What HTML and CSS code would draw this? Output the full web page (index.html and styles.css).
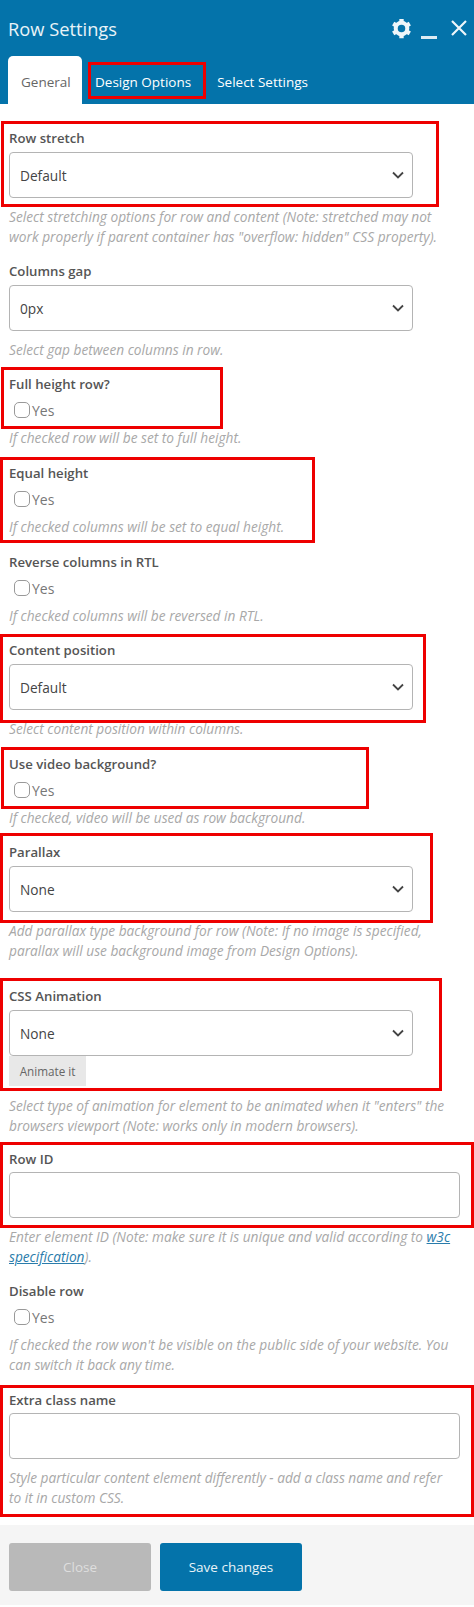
FILE: index.html
```html
<!DOCTYPE html>
<html lang="en">
  <head>
    <meta charset="UTF-8" />
    <title>Row Settings</title>
    <link rel="stylesheet" href="styles.css">
  </head>
  <body>
    <div class="panel">
      <div class="header">
        <div class="title-row">
          <div class="title">Row Settings</div>
          <div class="controls">
            <svg class="gear" viewBox="0 0 24 24">
              <g fill="none" stroke="#eef6fa">
                <circle cx="12" cy="12" r="6.6" stroke-width="4.6" />
                <path stroke-width="5" d="M12 1v4M12 19v4M2.5 6.5l3.5 2M18 15.5l3.5 2M2.5 17.5l3.5-2M18 8.500l3.5-2" />
              </g>
            </svg>
            <div class="minimize"></div>
            <svg class="close-x" viewBox="0 0 16 16"><path stroke="#eef6fa" stroke-width="2.2" d="M1 1l14 14M15 1L1 15"/></svg>
          </div>
        </div>
        <div class="tabs">
          <div class="tab active">General</div>
          <div class="tab">Design Options</div>
          <div class="tab">Select Settings</div>
        </div>
      </div>

      <div class="body">
        <div class="field">
          <div class="label">Row stretch</div>
          <div class="select">Default<svg viewBox="0 0 12 8"><path d="M1 1.500l5 5 5-5"/></svg></div>
          <div class="help">Select stretching options for row and content (Note: stretched may not work properly if parent container has "overflow: hidden" CSS property).</div>
        </div>
        <div class="field">
          <div class="label">Columns gap</div>
          <div class="select">0px<svg viewBox="0 0 12 8"><path d="M1 1.500l5 5 5-5"/></svg></div>
          <div class="help">Select gap between columns in row.</div>
        </div>
        <div class="field gap-wide">
          <div class="label">Full height row?</div>
          <div class="check"><span class="box"></span>Yes</div>
          <div class="help">If checked row will be set to full height.</div>
        </div>
        <div class="field gap-wide">
          <div class="label">Equal height</div>
          <div class="check"><span class="box"></span>Yes</div>
          <div class="help">If checked columns will be set to equal height.</div>
        </div>
        <div class="field">
          <div class="label">Reverse columns in RTL</div>
          <div class="check"><span class="box"></span>Yes</div>
          <div class="help">If checked columns will be reversed in RTL.</div>
        </div>
        <div class="field gap-wide">
          <div class="label">Content position</div>
          <div class="select">Default<svg viewBox="0 0 12 8"><path d="M1 1.500l5 5 5-5"/></svg></div>
          <div class="help">Select content position within columns.</div>
        </div>
        <div class="field">
          <div class="label">Use video background?</div>
          <div class="check"><span class="box"></span>Yes</div>
          <div class="help">If checked, video will be used as row background.</div>
        </div>
        <div class="field parallax">
          <div class="label">Parallax</div>
          <div class="select">None<svg viewBox="0 0 12 8"><path d="M1 1.500l5 5 5-5"/></svg></div>
          <div class="help">Add parallax type background for row (Note: If no image is specified, parallax will use background image from Design Options).</div>
        </div>
        <div class="field animation">
          <div class="label">CSS Animation</div>
          <div class="select">None<svg viewBox="0 0 12 8"><path d="M1 1.500l5 5 5-5"/></svg></div>
          <div class="animate">Animate it</div>
          <div class="help">Select type of animation for element to be animated when it "enters" the browsers viewport (Note: works only in modern browsers).</div>
        </div>
        <div class="field">
          <div class="label">Row ID</div>
          <div class="input"></div>
          <div class="help">Enter element ID (Note: make sure it is unique and valid according to <a href="#">w3c</a> <a href="#">specification</a>).</div>
        </div>
        <div class="field gap-wide">
          <div class="label">Disable row</div>
          <div class="check"><span class="box"></span>Yes</div>
          <div class="help">If checked the row won't be visible on the public side of your website. You can switch it back any time.</div>
        </div>
        <div class="field last">
          <div class="label">Extra class name</div>
          <div class="input"></div>
          <div class="help">Style particular content element differently - add a class name and refer to it in custom CSS.</div>
        </div>
      </div>

      <div class="footer">
        <div class="btn btn-close">Close</div>
        <div class="btn btn-save">Save changes</div>
      </div>

      <!-- red annotation boxes drawn on top of the form -->
      <div class="mark mark-design"></div>
      <div class="mark mark-stretch"></div>
      <div class="mark mark-full"></div>
      <div class="mark mark-equal"></div>
      <div class="mark mark-position"></div>
      <div class="mark mark-video"></div>
      <div class="mark mark-parallax"></div>
      <div class="mark mark-animation"></div>
      <div class="mark mark-rowid"></div>
      <div class="mark mark-extra"></div>
    </div>
  </body>
</html>
```
FILE: styles.css
```css
* {
  box-sizing: border-box;
}

body {
  margin: 0;
  background: #fff;
  font-family: "Open Sans", "Noto Sans", sans-serif;
  font-size: 14px;
  color: #555;
}

.panel {
  position: relative;
  width: 474px;
  height: 1607px;
  overflow: hidden;
}

/* Header */

.header {
  height: 104px;
  background: #0473aa;
  padding: 0 7px 0 8px;
}

.title-row {
  display: flex;
  justify-content: space-between;
  align-items: center;
  height: 56px;
}

.title {
  font-size: 18.3px;
  color: #e9f3f8;
}

.controls {
  display: flex;
  align-items: center;
  gap: 9px;
}

.gear {
  width: 21px;
  height: 21px;
}

.minimize {
  width: 16px;
  height: 3px;
  margin-top: 18px;
  background: #dcebf3;
}

.close-x {
  width: 16px;
  height: 16px;
  margin-left: 5px;
}

.tabs {
  display: flex;
  height: 48px;
}

.tab {
  padding: 0 13px;
  line-height: 52px;
  color: #fff;
  font-size: 13.5px;
}

.tab.active {
  width: 74px;
  background: #fff;
  color: #666;
  border-radius: 5px 5px 0 0;
}

/* Form */

.body {
  padding: 24px 9px 0;
}

.field {
  margin-bottom: 14px;
}

.field.gap-wide {
  margin-bottom: 15px;
}

.field.parallax {
  margin-bottom: 25px;
}

.field.animation {
  margin-bottom: 13px;
}

.field.last {
  margin-bottom: 17px;
}

.label {
  font-weight: 600;
  font-size: 13.2px;
  line-height: 20px;
}

.select,
.input {
  height: 46px;
  border: 1px solid #b4b4b4;
  border-radius: 4px;
  background: #fff;
}

.select {
  display: flex;
  align-items: center;
  justify-content: space-between;
  width: 404px;
  margin-top: 4px;
  padding: 0 8px 0 10px;
  font-size: 13.7px;
  color: #444;
}

.select svg {
  width: 12px;
  height: 8px;
  fill: none;
  stroke: #444;
  stroke-width: 1.8;
}

.input {
  width: 451px;
  margin-top: 3px;
}

.help {
  width: 445px;
  margin-top: 9px;
  font-size: 13.7px;
  line-height: 20px;
  font-style: italic;
  color: #a8a8a8;
}

.help a {
  color: #2a7cab;
}

.check {
  display: flex;
  align-items: center;
  height: 26px;
  margin-top: 3px;
  padding-left: 5px;
  color: #777;
}

.check + .help {
  margin-top: 5px;
}

.box {
  width: 16px;
  height: 16px;
  margin-right: 2px;
  border: 1px solid #999;
  border-radius: 5px;
}

.animate {
  width: 77px;
  height: 30px;
  background: #e8e8e8;
  color: #666;
  font-size: 11.7px;
  line-height: 30px;
  text-align: center;
}

.animate + .help {
  margin-top: 10px;
}

/* Footer */

.footer {
  height: 80px;
  display: flex;
  gap: 9px;
  padding: 18px 9px;
  background: #f5f5f5;
}

.btn {
  width: 142px;
  height: 48px;
  line-height: 48px;
  border-radius: 3px;
  text-align: center;
  font-size: 13.5px;
}

.btn-close {
  background: #b9b9b9;
  color: #dedede;
}

.btn-save {
  background: #0473aa;
  color: #e9f3f8;
}

/* Red annotation boxes */

.mark {
  position: absolute;
  border: 3.5px solid #ee0000;
}

.mark-design { left: 88px; top: 62px; width: 118px; height: 37px; }
.mark-stretch { left: 1px; top: 121px; width: 438px; height: 86px; }
.mark-full { left: 1px; top: 367px; width: 222px; height: 62px; }
.mark-equal { left: 0; top: 457px; width: 315px; height: 86px; }
.mark-position { left: 0; top: 634px; width: 426px; height: 89px; }
.mark-video { left: 1px; top: 747px; width: 368px; height: 62px; }
.mark-parallax { left: 0; top: 833px; width: 433px; height: 90px; }
.mark-animation { left: 0; top: 978px; width: 442px; height: 113px; }
.mark-rowid { left: 0; top: 1142px; width: 474px; height: 86px; }
.mark-extra { left: 0; top: 1385px; width: 474px; height: 132px; }
```
